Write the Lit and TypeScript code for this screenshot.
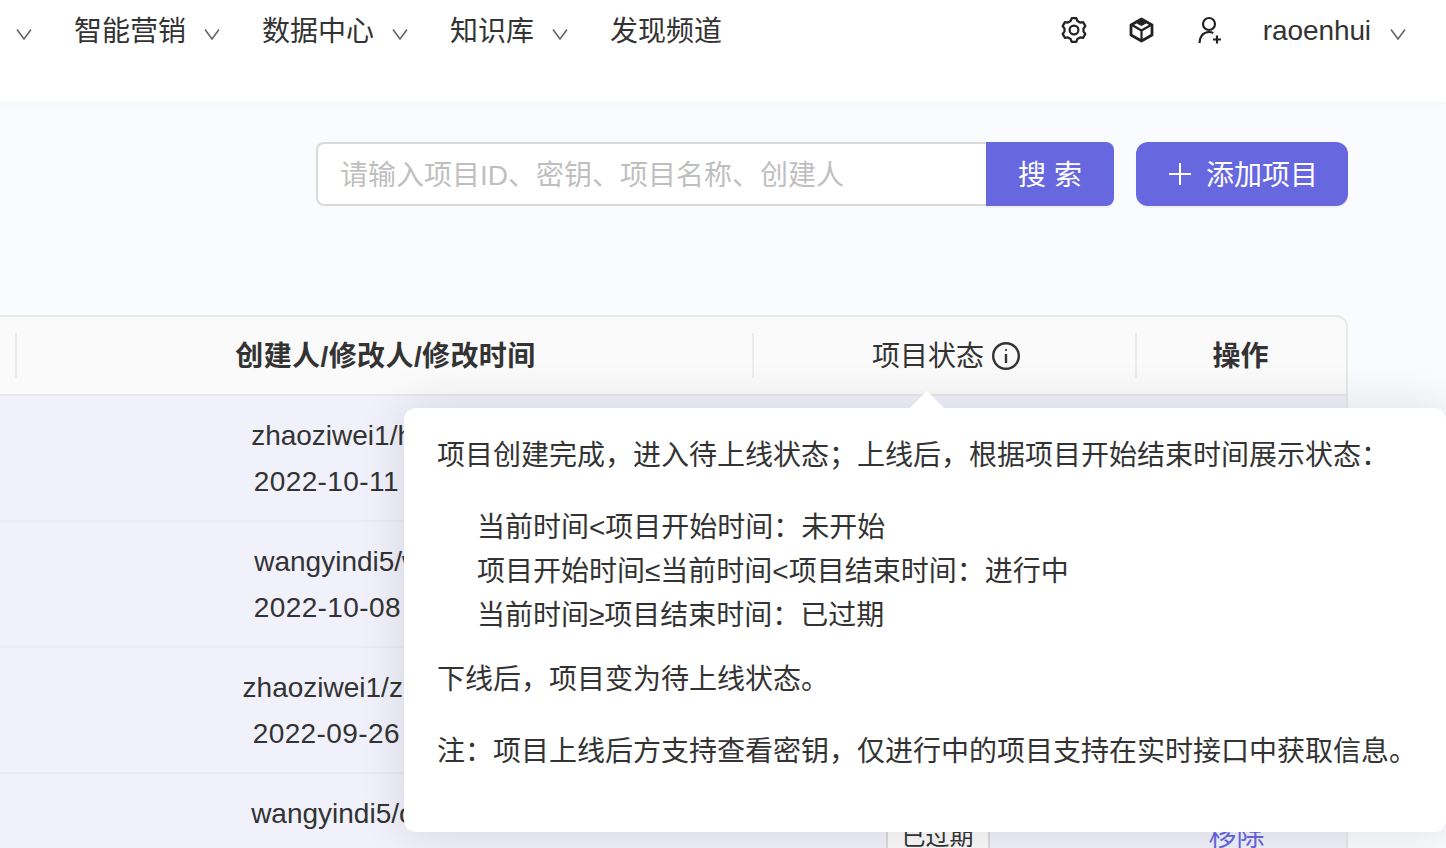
import { LitElement, html, css, svg } from "lit";
import { customElement } from "lit/decorators.js";

const gearPoints = (() => {
  const pts: string[] = [];
  const pt = (r: number, deg: number) => {
    const a = (deg * Math.PI) / 180;
    return `${(13 + r * Math.cos(a)).toFixed(2)},${(13 + r * Math.sin(a)).toFixed(2)}`;
  };
  for (let i = 0; i < 6; i++) {
    const a = -90 + 60 * i;
    pts.push(pt(9.6, a - 21), pt(12, a - 11), pt(12, a + 11), pt(9.6, a + 21));
  }
  return pts.join(" ");
})();

const chevron = html`<svg class="chev" width="16" height="12" viewBox="0 0 16 12" fill="none" stroke="#666" stroke-width="1.6"><path d="M1 1.5 8 11l7-9.5"/></svg>`;

interface Row { names: string; time: string; status?: string; action?: string; }
const rows: Row[] = [
  { names: "zhaoziwei1/huangjing", time: "2022-10-11 14:33:52" },
  { names: "wangyindi5/wangrui1", time: "2022-10-08 11:20:46" },
  { names: "zhaoziwei1/zhaoziwei1", time: "2022-09-26 17:05:18" },
  { names: "wangyindi5/chenliao3", time: "2022-09-20 10:42:07", status: "已过期", action: "移除" },
];

@customElement("app-root")
export class AppRoot extends LitElement {
  static styles = css`
    :host {
      display: block;
      position: relative;
      width: 1446px;
      height: 848px;
      overflow: hidden;
      background: #fafbff;
      color: #333;
      font: 28px/44px "Liberation Sans", "Noto Sans CJK SC", sans-serif;
    }
    .nav {
      display: flex;
      justify-content: space-between;
      height: 102px;
      padding: 0 40px 0 16px;
      box-sizing: border-box;
      background: #fff;
      box-shadow: 0 2px 10px rgba(0, 0, 0, 0.03);
    }
    .menu, .tools { display: flex; align-items: center; height: 60px; }
    .item { display: flex; align-items: center; gap: 18px; margin-right: 42px; }
    .item span { padding-top: 4px; }
    .chev { display: block; margin-top: 7px; }
    .tools svg.ic { display: block; }
    .gear { margin-right: 42px; }
    .cube { margin-right: 44px; }
    .user { margin-right: 41px; }
    .me { display: flex; align-items: center; gap: 19px; }
    .me span { padding-top: 2px; letter-spacing: -0.1px; }

    .toolbar {
      display: flex;
      justify-content: flex-end;
      gap: 22px;
      padding: 40px 98px 0 0;
    }
    .search { display: flex; width: 798px; height: 64px; }
    input {
      flex: 1;
      min-width: 0;
      box-sizing: border-box;
      padding: 4px 22px 0;
      border: 2px solid #d9d9d9;
      border-right: 0;
      border-radius: 8px 0 0 8px;
      background: #fff;
      color: #333;
      font: inherit;
      outline: none;
    }
    input::placeholder { color: #bfbfbf; opacity: 1; }
    button {
      display: flex;
      align-items: center;
      justify-content: center;
      height: 64px;
      padding: 0;
      border: 0;
      background: #6767e0;
      color: #fff;
      font: inherit;
      box-shadow: 0 2px 0 rgba(0, 0, 0, 0.045);
    }
    button span { padding-top: 4px; }
    .go { width: 128px; border-radius: 0 8px 8px 0; }
    .add { width: 212px; gap: 15px; border-radius: 12px; padding-left: 3px; box-sizing: border-box; }

    .table {
      margin: 109px 98px 0 -40px;
      border: 2px solid #e8e8e8;
      border-radius: 12px 12px 0 0;
      background: #f0f1fb;
    }
    .head, .row { display: grid; grid-template-columns: 53px 737px 383px 1fr; }
    .head {
      height: 77px;
      border-bottom: 2px solid #e8e8e8;
      border-radius: 10px 10px 0 0;
      background: #fafafa;
      font-weight: 700;
    }
    .th { position: relative; display: flex; align-items: center; justify-content: center; }
    .th > span { padding-top: 3px; }
    .th.sep::before {
      content: "";
      position: absolute;
      left: 0;
      top: 16px;
      width: 2px;
      height: 45px;
      background: #ececec;
    }
    .th.title { padding-left: 4px; letter-spacing: 0.4px; }
    .th.plain { font-weight: 400; gap: 8px; padding-left: 5px; }
    .row { height: 124px; border-bottom: 2px solid #e9e9f3; }
    .td { display: flex; align-items: center; justify-content: center; padding-top: 2px; }
    .who { flex-direction: column; line-height: 46px; white-space: nowrap; overflow: hidden; padding-left: 3px; }
    .time { padding-left: 3px; letter-spacing: 0.4px; }
    .state { padding-right: 12px; }
    .tag {
      padding: 0 14px;
      border: 2px solid #d9d9d9;
      border-radius: 4px;
      background: #fafafa;
      font-size: 24px;
      line-height: 40px;
    }
    .ops { padding-right: 8px; color: #6767e0; }

    .tip {
      position: absolute;
      left: 404px;
      top: 408px;
      width: 1042px;
      height: 424px;
      box-sizing: border-box;
      padding: 26px 33px 0;
      border-radius: 12px;
      background: #fff;
      box-shadow: 0 0 48px rgba(0, 0, 0, 0.12);
    }
    .tip::before {
      content: "";
      position: absolute;
      left: 506px;
      top: -17px;
      width: 34px;
      height: 17px;
      background: #fff;
      clip-path: polygon(50% 0, 100% 100%, 0 100%);
    }
    .tip p { margin: 0; white-space: nowrap; }
    .tip ul { margin: 28px 0 20px; padding: 0 0 0 40px; list-style: none; }
    .tip .note { margin-top: 28px; }
  `;

  render() {
    return html`
      <header class="nav">
        <div class="menu">
          <div class="item">${chevron}</div>
          <div class="item"><span>智能营销</span>${chevron}</div>
          <div class="item"><span>数据中心</span>${chevron}</div>
          <div class="item"><span>知识库</span>${chevron}</div>
          <div class="item"><span>发现频道</span></div>
        </div>
        <div class="tools">
          <svg class="ic gear" width="26" height="26" viewBox="0 0 26 26" fill="none" stroke="#222" stroke-width="2.2" stroke-linejoin="round">
            ${svg`<polygon points=${gearPoints}/><circle cx="13" cy="13" r="4.4"/>`}
          </svg>
          <svg class="ic cube" width="25" height="26" viewBox="0 0 25 26" fill="none" stroke="#222" stroke-width="2.8" stroke-linejoin="round">
            <path d="M12.5 2 23 8v10l-10.500 6L2 18V8z"/>
            <path d="M3 8l9.500 5.500L22 8M12.500 13.500V24" stroke-width="2.200"/>
            <path d="M12.500 3 17 6l-4.500 2.600L8 6z" fill="#222" stroke-width="1"/>
          </svg>
          <svg class="ic user" width="24" height="28" viewBox="0 0 24 28" fill="none" stroke="#222" stroke-width="2.200">
            <circle cx="11" cy="8" r="6"/>
            <path d="M1.500 27c0-6 3.500-11 9.500-11 1.500 0 3 .3 4.300 1"/>
            <path d="M15 23.500h8M19 19.500v8"/>
          </svg>
          <div class="me"><span>raoenhui</span>${chevron}</div>
        </div>
      </header>

      <section class="toolbar">
        <div class="search">
          <input placeholder="请输入项目ID、密钥、项目名称、创建人" />
          <button class="go"><span>搜 索</span></button>
        </div>
        <button class="add">
          <svg width="22" height="22" viewBox="0 0 22 22" stroke="#fff" stroke-width="2"><path d="M0 11h22M11 0v22"/></svg>
          <span>添加项目</span>
        </button>
      </section>

      <section class="table">
        <div class="head">
          <div class="th"></div>
          <div class="th sep title"><span>创建人/修改人/修改时间</span></div>
          <div class="th sep plain">
            <span>项目状态</span>
            <svg width="28" height="28" viewBox="0 0 28 28" fill="none" stroke="#333" stroke-width="2.400">
              <circle cx="14" cy="14" r="12.800"/>
              <path d="M14 12v9"/>
              <circle cx="14" cy="8" r="0.700" fill="#333" stroke-width="1"/>
            </svg>
          </div>
          <div class="th sep"><span>操作</span></div>
        </div>
        ${rows.map(
          (r) => html`
            <div class="row">
              <div class="td"></div>
              <div class="td who"><span>${r.names}</span><span class="time">${r.time}</span></div>
              <div class="td state">${r.status ? html`<span class="tag">${r.status}</span>` : ""}</div>
              <div class="td ops">${r.action ?? ""}</div>
            </div>
          `
        )}
      </section>

      <aside class="tip">
        <p>项目创建完成，进入待上线状态；上线后，根据项目开始结束时间展示状态：</p>
        <ul>
          <li>当前时间&lt;项目开始时间：未开始</li>
          <li>项目开始时间≤当前时间&lt;项目结束时间：进行中</li>
          <li>当前时间≥项目结束时间：已过期</li>
        </ul>
        <p>下线后，项目变为待上线状态。</p>
        <p class="note">注：项目上线后方支持查看密钥，仅进行中的项目支持在实时接口中获取信息。</p>
      </aside>
    `;
  }
}
